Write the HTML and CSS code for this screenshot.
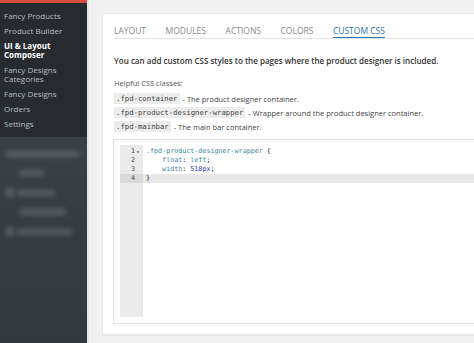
FILE: index.html
```html
<!DOCTYPE html>
<html>
<head>
<meta charset="utf-8">
<link rel="stylesheet" href="styles.css">
</head>
<body>
<div class="sidebar">
  <div class="redbar"></div>
  <ul class="submenu">
    <li>Fancy Products</li>
    <li>Product Builder</li>
    <li class="current">UI &amp; Layout Composer</li>
    <li>Fancy Designs Categories</li>
    <li>Fancy Designs</li>
    <li>Orders</li>
    <li>Settings</li>
  </ul>
  <div class="blurred">
    <div class="bitem"><span class="bl w75"></span></div>
    <div class="bitem"><span class="bl ind w25"></span></div>
    <div class="bitem"><span class="bico"></span><span class="bl w38"></span></div>
    <div class="bitem"><span class="bl ind w48"></span></div>
    <div class="bitem"><span class="bico"></span><span class="bl w55"></span></div>
  </div>
</div>
<div class="main">
  <div class="panel">
    <div class="tabs">
      <span class="tab">Layout</span>
      <span class="tab">Modules</span>
      <span class="tab">Actions</span>
      <span class="tab">Colors</span>
      <span class="tab active">Custom CSS</span>
    </div>
    <p class="intro">You can add custom CSS styles to the pages where the product designer is included.</p>
    <p class="helpful">Helpful CSS classes:</p>
    <div class="classes">
      <div class="crow"><code class="chip">.fpd-container</code><span class="desc">- The product designer container.</span></div>
      <div class="crow"><code class="chip">.fpd-product-designer-wrapper</code><span class="desc">- Wrapper around the product designer container.</span></div>
      <div class="crow"><code class="chip">.fpd-mainbar</code><span class="desc">- The main bar container.</span></div>
    </div>
    <div class="editor-box">
      <div class="editor">
        <div class="gutter">
          <div class="gl">1<span class="fold">&#9662;</span></div>
          <div class="gl">2</div>
          <div class="gl">3</div>
          <div class="gl active">4</div>
        </div>
        <div class="code">
          <div class="cl"><span class="sel">.fpd-product-designer-wrapper</span> <span class="pun">{</span></div>
          <div class="cl">    <span class="prop">float</span><span class="pun">:</span> <span class="val">left</span><span class="pun">;</span></div>
          <div class="cl">    <span class="prop">width</span><span class="pun">:</span> <span class="num">518px</span><span class="pun">;</span></div>
          <div class="cl active"><span class="pun">}</span></div>
        </div>
      </div>
    </div>
  </div>
</div>
</body>
</html>
```

FILE: styles.css
```css
* { box-sizing: border-box; }
html, body { margin: 0; padding: 0; }
body {
  width: 474px;
  height: 343px;
  overflow: hidden;
  display: flex;
  font-family: "Open Sans", "Liberation Sans", sans-serif;
  background: #f1f1f1;
}
.sidebar {
  width: 89px;
  flex: none;
  background: #33383d;
  border-right: 2px solid #e6e6e6;
  display: flex;
  flex-direction: column;
}
.redbar {
  height: 3px;
  background: #d64e3a;
}
.submenu {
  list-style: none;
  margin: 0;
  padding: 5px 0 6px;
  background: #272b30;
  height: 134px;
}
.submenu li {
  font-size: 8px;
  line-height: 9px;
  color: #b9bdc1;
  padding: 3px 4px 3px 4px;
}
.submenu li.current {
  color: #fff;
  font-weight: 700;
}
.blurred {
  padding: 7px 0 0;
  background: linear-gradient(#3b4045, #363b40 110px, #33383d);
  flex: 1;
}
.bitem {
  height: 19.5px;
  display: flex;
  align-items: center;
  padding-left: 5px;
  gap: 3px;
  filter: blur(2.5px);
}
.bl {
  display: block;
  height: 6px;
  background: rgba(200, 205, 210, 0.22);
  border-radius: 3px;
}
.bl.ind { margin-left: 14px; }
.bico {
  display: block;
  width: 9px;
  height: 9px;
  background: rgba(200, 205, 210, 0.22);
  border-radius: 2px;
}
.w75 { width: 75px; }
.w25 { width: 25px; }
.w38 { width: 38px; }
.w48 { width: 48px; }
.w55 { width: 55px; }

.main {
  flex: 1;
  min-width: 0;
  padding: 13px 0 0 13px;
  overflow: hidden;
}
.panel {
  width: 420px;
  height: 322px;
  background: #fff;
  border: 1px solid #e8e8e8;
  box-shadow: 0 1px 1px rgba(0,0,0,0.04);
  padding: 0 0 0 11px;
}
.tabs {
  display: flex;
  gap: 19.5px;
  border-bottom: 1px solid #e3e3e3;
  height: 25px;
  padding-top: 11px;
}
.tab {
  font-size: 8.5px;
  line-height: 11px;
  text-transform: uppercase;
  color: #8a8a8a;
  height: 13px;
  padding-bottom: 2px;
  border-bottom: 1.5px solid transparent;
}
.tab.active {
  color: #2f75a8;
  border-bottom-color: #2f75a8;
}
.intro {
  margin: 16px 0 0;
  font-size: 8.05px;
  line-height: 11px;
  font-weight: 600;
  color: #333;
}
.helpful {
  margin: 12px 0 0;
  font-size: 7.5px;
  line-height: 10px;
  color: #555;
}
.classes {
  margin-top: 5px;
  display: flex;
  flex-direction: column;
  gap: 3px;
}
.crow {
  display: flex;
  align-items: center;
  gap: 3px;
  height: 11px;
}
.chip {
  font-family: "DejaVu Sans Mono", "Liberation Mono", monospace;
  font-size: 7.3px;
  line-height: 11px;
  background: #ececec;
  color: #444;
  padding: 0 2px;
}
.desc {
  font-size: 7.5px;
  color: #444;
}
.editor-box {
  margin: 7px 0 0 -1px;
  width: 362px;
  height: 185px;
  border: 1px solid #e2e2e2;
  padding: 5px 0 6px 6px;
}
.editor {
  display: flex;
  height: 100%;
  background: #fff;
}
.gutter {
  width: 23px;
  flex: none;
  background: #ebebeb;
  padding-top: 2px;
}
.gl {
  font-family: "DejaVu Sans Mono", "Liberation Mono", monospace;
  font-size: 6.7px;
  line-height: 9px;
  height: 9px;
  color: #444;
  text-align: right;
  padding-right: 8px;
  position: relative;
}
.gl.active { background: #dadada; }
.fold {
  position: absolute;
  left: 16px;
  top: 0;
  font-size: 6px;
  color: #666;
}
.code {
  flex: 1;
  padding-top: 2px;
}
.cl {
  font-family: "DejaVu Sans Mono", "Liberation Mono", monospace;
  font-size: 6.7px;
  line-height: 9px;
  height: 9px;
  white-space: pre;
  padding-left: 3px;
  color: #222;
}
.cl.active { background: #e8e8e8; }
.sel { color: #3a8a9c; }
.prop { color: #4a86b4; }
.val { color: #3a8a9c; }
.num { color: #1e2fb5; }
.pun { color: #222; }
```
